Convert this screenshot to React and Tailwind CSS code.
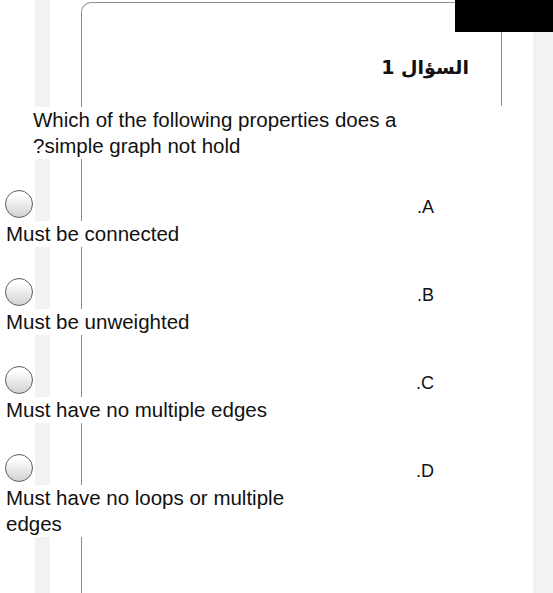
import React from 'react';

const options = [
  { letter: '.A', label: ['Must be connected'] },
  { letter: '.B', label: ['Must be unweighted'] },
  { letter: '.C', label: ['Must have no multiple edges'] },
  { letter: '.D', label: ['Must have no loops or multiple', 'edges'] },
];

const Radio = () => (
  <span className="block h-[28px] w-[28px] shrink-0 rounded-full border-[1.5px] border-[#5f5f5f] bg-[linear-gradient(to_bottom,#ffffff_15%,#d2d2d2)]" />
);

const App = () => {
  return (
    <div className="relative h-[593px] w-[553px] overflow-hidden bg-[linear-gradient(to_right,#fff_35px,#f2f2f2_35px,#f2f2f2_50px,#fff_50px,#fff_533px,#f2f2f2_533px)] font-['Liberation_Sans',Arial,sans-serif] text-[#111111]">
      {/* card frame */}
      <div className="pointer-events-none absolute inset-0 flex flex-col">
        <div className="ml-[81px] mt-[2px] h-[104px] w-[421px] shrink-0 rounded-t-[10px] border-x border-t border-[#8f8f8f]" />
        <div className="ml-[81px] flex-1 border-l border-[#8f8f8f]" />
      </div>

      {/* redaction box */}
      <div className="absolute right-0 top-0 h-[32px] w-[98px] bg-black" />

      <div className="relative">
        <div className="flex h-[107px] justify-end pr-[84px] pt-[54px]">
          <h2 dir="rtl" className="font-['DejaVu_Sans',sans-serif] text-[19px] font-bold leading-[26px]">
            السؤال 1
          </h2>
        </div>

        <p className="ml-[33px] w-fit bg-white text-[20.5px] leading-[26px]">
          Which of the following properties does a
          <br />
          ?simple graph not hold
        </p>

        <div className="mt-[31px] flex flex-col gap-[31px]">
          {options.map((o) => (
            <div key={o.letter} className="flex flex-col">
              <div className="flex w-[434px] items-start justify-between pl-[5px]">
                <Radio />
                <span className="mt-[6px] text-[18px] leading-[22px]">{o.letter}</span>
              </div>
              <p className="ml-[6px] mt-[3px] w-fit bg-white text-[20.5px] leading-[26px]">
                {o.label.map((l, i) => (
                  <React.Fragment key={i}>
                    {i > 0 && <br />}
                    {l}
                  </React.Fragment>
                ))}
              </p>
            </div>
          ))}
        </div>
      </div>
    </div>
  );
};

export default App;
